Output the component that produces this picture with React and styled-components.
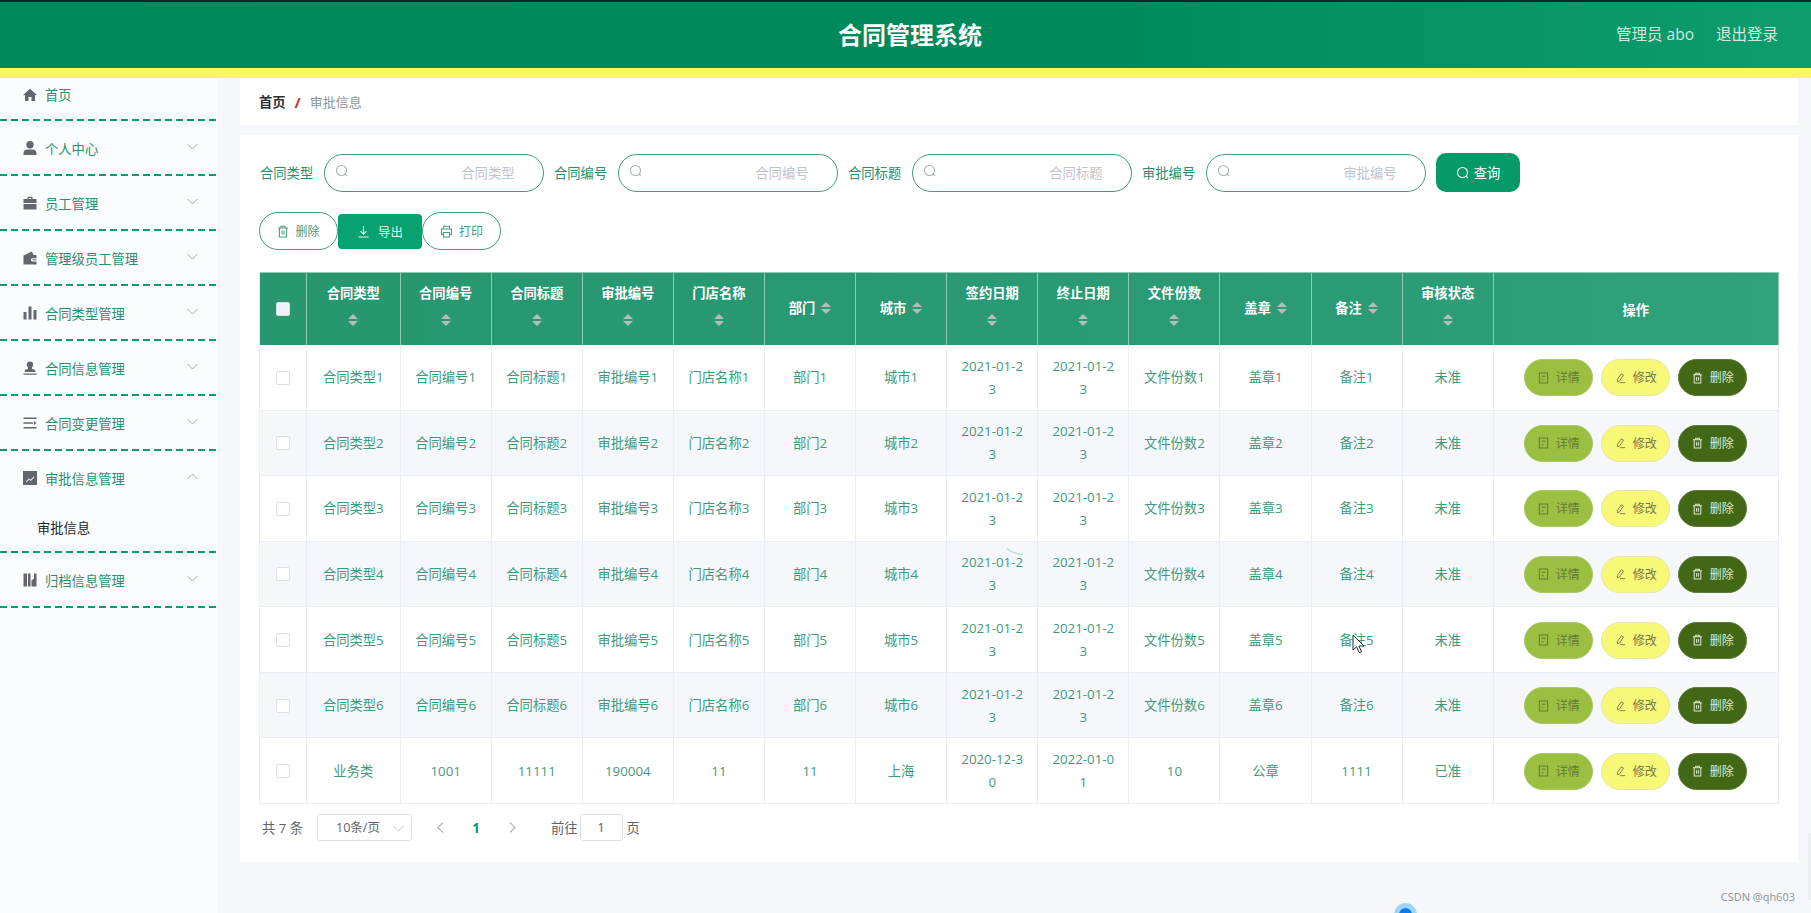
import React from 'react';
import styled, { createGlobalStyle } from 'styled-components';

const GlobalStyle = createGlobalStyle`
    html, body {
        margin: 0;
        padding: 0;
        background: #f5f7fa;
    }
    * {
        box-sizing: border-box;
    }
    body {
        font-family: 'Open Sans', 'Noto Sans CJK SC', sans-serif;
        font-size: 13.3px;
    }
`;

const Page = styled.div`
    position: relative;
    width: 1811px;
    height: 913px;
    overflow: hidden;
    background: #f5f7fa;
`;

const Header = styled.header`
    display: grid;
    grid-template-columns: 1fr auto 1fr;
    align-items: center;
    height: 78px;
    padding: 0 33px 4px 42px;
    background: linear-gradient(90deg, #00885a 0%, #008a5b 60%, #0f9d6e 100%);
    border-top: 2px solid #1d2127;
    border-bottom: 10px solid #f8f85c;
`;

const Title = styled.h1`
    grid-column: 2;
    margin: 0;
    font-size: 24px;
    font-weight: 700;
    color: #fff;
`;

const UserBar = styled.div`
    grid-column: 3;
    display: flex;
    justify-content: flex-end;
    gap: 22px;
    font-size: 15.5px;
    color: #cfe9dd;
`;

const Body = styled.div`
    display: flex;
    height: 835px;
`;

const Sidebar = styled.nav`
    flex: none;
    width: 217px;
    background: #fbfcfd;
`;

const MenuItem = styled.div`
    position: relative;
    display: flex;
    align-items: center;
    height: ${(props) => props.$height || 55}px;
    padding: 0 0 ${(props) => (props.$first ? 10 : 1)}px 23px;
    color: #2a8f70;
    &::after {
        content: '';
        display: ${(props) => (props.$open ? 'none' : 'block')};
        position: absolute;
        left: 0;
        right: 0;
        bottom: 0;
        height: 2px;
        background: repeating-linear-gradient(90deg, #0a9b6c 0 7px, transparent 7px 11px);
    }
`;

const MenuIcon = styled.svg`
    flex: none;
    width: 14px;
    height: 14px;
    margin-right: 8px;
    fill: #63666c;
`;

const Chevron = styled.svg`
    position: absolute;
    left: 187px;
    top: 22px;
    width: 11px;
    height: 7px;
    fill: none;
    stroke: #a6abb3;
    stroke-width: 1;
`;

const SubItem = styled(MenuItem)`
    padding: 0 0 4px 37px;
    color: #22262b;
`;

const Main = styled.main`
    flex: 1;
    min-width: 0;
    padding: 0 13px 0 23px;
`;

const Crumbs = styled.div`
    display: flex;
    align-items: center;
    height: 47px;
    margin-bottom: 10px;
    padding-left: 19px;
    background: #fff;
`;

const CrumbHome = styled.span`
    font-weight: 700;
    color: #303133;
`;

const CrumbSep = styled.span`
    margin: 0 9px;
    font-size: 15px;
    font-weight: 700;
    color: #c0341d;
`;

const CrumbCurrent = styled.span`
    font-size: 13px;
    color: #8b949b;
`;

const Card = styled.section`
    height: 727px;
    padding: 18px 19px 0;
    background: #fff;
`;

const SearchRow = styled.div`
    display: flex;
    align-items: center;
    height: 39px;
    padding-left: 1px;
`;

const SearchLabel = styled.label`
    width: 53px;
    margin-right: 10.5px;
    color: #2c8d6f;
    white-space: nowrap;
`;

const SearchBox = styled.div`
    position: relative;
    width: 220px;
    height: 38px;
    margin-right: 10.5px;
    border: 1px solid #3f9c80;
    border-radius: 19px;
    background: #fff;
    color: #a9b3b5;
    & > svg {
        position: absolute;
        left: 10px;
        top: 9px;
    }
`;

const SearchInput = styled.input`
    width: 100%;
    height: 100%;
    padding: 0 28px 0 30px;
    border: 0;
    outline: 0;
    background: transparent;
    font: inherit;
    text-align: right;
    &::placeholder {
        color: #bfc4cb;
        opacity: 1;
    }
`;

const QueryButton = styled.button`
    display: flex;
    align-items: center;
    justify-content: center;
    gap: 4px;
    width: 84px;
    height: 39px;
    border: 0;
    border-radius: 10px;
    background: #079a68;
    color: #fff;
    font: inherit;
`;

const ActionRow = styled.div`
    display: flex;
    align-items: center;
    height: 38px;
    margin: 20px 0 22px;
`;

const OutlineButton = styled.button`
    display: flex;
    align-items: center;
    justify-content: center;
    gap: 6px;
    width: 79px;
    height: 38px;
    border: 1px solid #3f9c80;
    border-radius: 19px;
    background: #fff;
    color: #4a9c80;
    font: inherit;
    font-size: 12px;
`;

const ExportButton = styled.button`
    display: flex;
    align-items: center;
    justify-content: center;
    gap: 8px;
    width: 84px;
    height: 35px;
    border: 0;
    border-radius: 4px;
    background: #07a26f;
    color: #dff5ea;
    font: inherit;
    font-size: 12.5px;
`;

const Table = styled.table`
    width: 1519px;
    table-layout: fixed;
    border-collapse: separate;
    border-spacing: 0;
    border-left: 1px solid #ebeef5;
`;

const HeadRow = styled.tr`
    background: linear-gradient(90deg, #26976f 0%, #2a9b75 70%, #30a27c 100%);
`;

const Th = styled.th`
    height: 73px;
    padding: 0 6px;
    border-top: 1px solid #8fcbb4;
    border-right: 1px solid #8fcbb4;
    color: #fff;
    font-size: 13.3px;
    font-weight: 700;
    text-align: center;
`;

const HeadInner = styled.div`
    display: flex;
    flex-direction: ${(props) => (props.$inline ? 'row' : 'column')};
    align-items: center;
    justify-content: center;
    gap: ${(props) => (props.$inline ? 6 : 12)}px;
    padding-bottom: ${(props) => (props.$inline ? 3 : 10)}px;
`;

const Sort = styled.span`
    display: inline-flex;
    flex-direction: column;
    gap: 2px;
    &::before,
    &::after {
        content: '';
        display: block;
        border-left: 5px solid transparent;
        border-right: 5px solid transparent;
    }
    &::before {
        border-bottom: 5px solid #b4bdb9;
    }
    &::after {
        border-top: 5px solid #b4bdb9;
    }
`;

const Row = styled.tr`
    background: ${(props) => (props.$striped ? '#f5f7fa' : '#fff')};
`;

const Td = styled.td`
    height: 65.57px;
    padding: 1px 13px 0;
    border-right: 1px solid #ebeef5;
    border-bottom: 1px solid #ebeef5;
    color: #3f9a7c;
    font-size: 13.3px;
    line-height: 23px;
    text-align: center;
    word-break: break-all;
`;

const Check = styled.span`
    display: block;
    width: 14px;
    height: 14px;
    margin: 0 auto;
    border: 1px solid #dcdfe6;
    border-radius: 2px;
    background: ${(props) => (props.$head ? '#eef2f7' : '#fff')};
`;

const RowActions = styled.div`
    display: flex;
    justify-content: center;
    gap: 8px;
`;

const tones = {
    detail: { bg: '#9abf41', fg: '#66793a', line: '#a9c866' },
    edit: { bg: '#f8f878', fg: '#77774a', line: '#e6e6a8' },
    remove: { bg: '#426816', fg: '#dfe8cf', line: '#5b7a38' },
};

const RowButton = styled.button`
    display: flex;
    align-items: center;
    justify-content: center;
    gap: 7px;
    width: 69px;
    height: 37px;
    padding: 0;
    border: 1px solid ${(props) => tones[props.$tone].line};
    border-radius: 19px;
    background: ${(props) => tones[props.$tone].bg};
    color: ${(props) => tones[props.$tone].fg};
    font: inherit;
    font-size: 12px;
    & > svg {
        width: 11px;
        height: 12px;
    }
`;

const Pager = styled.div`
    display: flex;
    align-items: center;
    height: 28px;
    margin-top: 10px;
    padding-left: 3px;
    color: #606266;
`;

const Total = styled.span`
    width: 55px;
`;

const SizeSelect = styled.div`
    position: relative;
    width: 95px;
    height: 27px;
    margin-right: 10px;
    padding-left: 18px;
    border: 1px solid #dcdfe6;
    border-radius: 3px;
    font-size: 12.5px;
    line-height: 25px;
    & > svg {
        position: absolute;
        right: 7px;
        top: 10px;
        left: auto;
    }
`;

const PageArrow = styled.span`
    display: flex;
    align-items: center;
    justify-content: center;
    width: 36px;
    color: #b4b8bf;
`;

const PageNumber = styled.span`
    width: 36px;
    font-weight: 700;
    color: #079a68;
    text-align: center;
`;

const GoText = styled.span`
    margin-left: ${(props) => props.$left || 0}px;
`;

const GoInput = styled.span`
    width: 43px;
    height: 27px;
    margin: 0 4px 0 2px;
    border: 1px solid #dcdfe6;
    border-radius: 3px;
    line-height: 25px;
    text-align: center;
`;

const Watermark = styled.span`
    position: absolute;
    right: 16px;
    bottom: 9px;
    font-size: 11px;
    color: #8f9296;
`;

const Cursor = styled.svg`
    position: absolute;
    left: 1352px;
    top: 634px;
    width: 13px;
    height: 20px;
`;

const BlueDot = styled.span`
    position: absolute;
    left: 1394px;
    top: 903px;
    width: 23px;
    height: 23px;
    border: 5px solid #9fd6ff;
    border-radius: 50%;
    background: #0a7cf0;
`;

const Arc = styled.svg`
    position: absolute;
    left: 1005px;
    top: 547px;
    width: 22px;
    height: 10px;
    fill: none;
    stroke: #c4e4da;
    stroke-width: 1.8;
`;

const ScrollEdge = styled.span`
    position: absolute;
    right: 0;
    top: 833px;
    width: 3px;
    height: 67px;
    background: #eceef0;
`;

const Search = () => (
    <svg width="14" height="14" viewBox="0 0 14 14" fill="none" stroke="currentColor" strokeWidth="1.1">
        <circle cx="6.5" cy="6.5" r="5" />
        <path d="M10 10l2 2" />
    </svg>
);

const Trash = () => (
    <svg width="12" height="13" viewBox="0 0 12 13" fill="none" stroke="currentColor" strokeWidth="1.1">
        <path d="M1 3h10M4 3V1.2h4V3M2.4 3v9h7.2V3M5 5.5v4M7 5.5v4" />
    </svg>
);

const Doc = () => (
    <svg width="12" height="13" viewBox="0 0 12 13" fill="none" stroke="currentColor" strokeWidth="1.1">
        <path d="M1.5 1h9v11h-9zM4 4.5h4M4 8.5h2" />
    </svg>
);

const Pen = () => (
    <svg width="13" height="13" viewBox="0 0 13 13" fill="none" stroke="currentColor" strokeWidth="1.1">
        <path d="M7.5 1.5l2.5 1.5-4.5 7-2.6 1-.1-2.8zM6 12h6" />
    </svg>
);

const Download = () => (
    <svg width="13" height="13" viewBox="0 0 13 13" fill="none" stroke="currentColor" strokeWidth="1.1">
        <path d="M6.5 1v8M3.5 6.2l3 3 3-3M1.5 12h10" />
    </svg>
);

const Printer = () => (
    <svg width="13" height="13" viewBox="0 0 13 13" fill="none" stroke="currentColor" strokeWidth="1.1">
        <path d="M3.5 4V1.2h6V4M3.5 9.5H1.5V4h10v5.5h-2M3.5 7.5h6v4.5h-6z" />
    </svg>
);

const Down = ({ up }) => (
    <Chevron viewBox="0 0 11 7">
        <path d={up ? 'M.5 6l5-5 5 5' : 'M.5 1l5 5 5-5'} />
    </Chevron>
);

const icons = {
    home: <path d="M7 .8L.3 6.8l.7.8L2 6.8V13h3.5V9h3v4H12V6.8l1 .8.7-.8z" />,
    user: <path d="M7 0a3.7 3.7 0 110 7.4A3.7 3.7 0 017 0zM.5 14v-2.2C.5 9.6 2.5 8.4 4.6 8.4h4.8c2.1 0 4.1 1.2 4.1 3.4V14z" />,
    bag: <path d="M4.5 3V.8h5V3H13.5v4H.5V3zM5.7 3h2.6V2H5.7zM.5 8h13v5.5H.5z" />,
    wallet: <path d="M.5 4.5L9 .5l1.5 3.5h3v3.2H9.5a1.6 1.6 0 000 3.2h4V13.5H.5zM9.6 8.3h3.9v1H9.6z" />,
    chart: <path d="M.5 6h3v7.5h-3zM5.5 .5h3v13h-3zM10.5 4h3v9.5h-3z" />,
    stamp: <path d="M7 .5a3.2 3.2 0 013.2 3.2c0 1.7-1.4 2.5-1.4 4l3.4 1.2V11H1.8V8.9l3.4-1.2c0-1.5-1.4-2.3-1.4-4A3.2 3.2 0 017 .5zM.5 12.5h13v1.2H.5z" />,
    lines: <path d="M.5 1.5h13v1.6H.5zM.5 6.2h9.5v1.6H.5zM.5 10.9h13v1.6H.5zM11 5l2.5 2-2.5 2z" />,
    trend: <path fillRule="evenodd" d="M0 0h14v14H0zM3 10.5l.6.7 2.6-2.6 1.7 1.4 3.4-3.8-.6-.6-2.9 3.2-1.7-1.4z" />,
    book: <path d="M.5 .5h3.5v13H.5zM5 .5h2.5v13H5zM8.5 .5h5v13h-5l0-6 2.5-2 0-5z" />,
};

const menu = [
    { text: '个人中心', icon: 'user' },
    { text: '员工管理', icon: 'bag' },
    { text: '管理级员工管理', icon: 'wallet' },
    { text: '合同类型管理', icon: 'chart' },
    { text: '合同信息管理', icon: 'stamp' },
    { text: '合同变更管理', icon: 'lines' },
];

const filters = ['合同类型', '合同编号', '合同标题', '审批编号'];

// 두 줄 헤더 / 한 줄 헤더는 inline 으로 구분
const columns = [
    { title: '合同类型', key: 'type', width: 93.6 },
    { title: '合同编号', key: 'no' },
    { title: '合同标题', key: 'name' },
    { title: '审批编号', key: 'approval' },
    { title: '门店名称', key: 'store' },
    { title: '部门', key: 'dept', inline: true },
    { title: '城市', key: 'city', inline: true },
    { title: '签约日期', key: 'start' },
    { title: '终止日期', key: 'end' },
    { title: '文件份数', key: 'files' },
    { title: '盖章', key: 'seal', inline: true },
    { title: '备注', key: 'note', inline: true },
];

const rows = [1, 2, 3, 4, 5, 6].map((n) => ({
    type: `合同类型${n}`,
    no: `合同编号${n}`,
    name: `合同标题${n}`,
    approval: `审批编号${n}`,
    store: `门店名称${n}`,
    dept: `部门${n}`,
    city: `城市${n}`,
    start: '2021-01-23',
    end: '2021-01-23',
    files: `文件份数${n}`,
    seal: `盖章${n}`,
    note: `备注${n}`,
    status: '未准',
}));

rows.push({
    type: '业务类',
    no: '1001',
    name: '11111',
    approval: '190004',
    store: '11',
    dept: '11',
    city: '上海',
    start: '2020-12-30',
    end: '2022-01-01',
    files: '10',
    seal: '公章',
    note: '1111',
    status: '已准',
});

function App() {
    return (
        <Page>
            <GlobalStyle />
            <Header>
                <Title>合同管理系统</Title>
                <UserBar>
                    <span>管理员 abo</span>
                    <span>退出登录</span>
                </UserBar>
            </Header>
            <Body>
                <Sidebar>
                    <MenuItem $height={43} $first>
                        <MenuIcon viewBox="0 0 14 14">{icons.home}</MenuIcon>
                        首页
                    </MenuItem>
                    {menu.map((item) => (
                        <MenuItem key={item.text}>
                            <MenuIcon viewBox="0 0 14 14">{icons[item.icon]}</MenuIcon>
                            {item.text}
                            <Down />
                        </MenuItem>
                    ))}
                    <MenuItem $open>
                        <MenuIcon viewBox="0 0 14 14">{icons.trend}</MenuIcon>
                        审批信息管理
                        <Down up />
                    </MenuItem>
                    <SubItem $height={47}>审批信息</SubItem>
                    <MenuItem>
                        <MenuIcon viewBox="0 0 14 14">{icons.book}</MenuIcon>
                        归档信息管理
                        <Down />
                    </MenuItem>
                </Sidebar>
                <Main>
                    <Crumbs>
                        <CrumbHome>首页</CrumbHome>
                        <CrumbSep>/</CrumbSep>
                        <CrumbCurrent>审批信息</CrumbCurrent>
                    </Crumbs>
                    <Card>
                        <SearchRow>
                            {filters.map((label) => (
                                <React.Fragment key={label}>
                                    <SearchLabel>{label}</SearchLabel>
                                    <SearchBox>
                                        <Search />
                                        <SearchInput placeholder={label} />
                                    </SearchBox>
                                </React.Fragment>
                            ))}
                            <QueryButton>
                                <Search />
                                查询
                            </QueryButton>
                        </SearchRow>
                        <ActionRow>
                            <OutlineButton>
                                <Trash />
                                删除
                            </OutlineButton>
                            <ExportButton>
                                <Download />
                                导出
                            </ExportButton>
                            <OutlineButton>
                                <Printer />
                                打印
                            </OutlineButton>
                        </ActionRow>
                        <Table>
                            <colgroup>
                                <col width="47" />
                                {columns.map((col) => (
                                    <col key={col.key} width={col.width || 91.1} />
                                ))}
                                <col width="91.1" />
                                <col width="285" />
                            </colgroup>
                            <thead>
                                <HeadRow>
                                    <Th>
                                        <Check $head />
                                    </Th>
                                    {columns.map((col) => (
                                        <Th key={col.key}>
                                            <HeadInner $inline={col.inline}>
                                                {col.title}
                                                <Sort />
                                            </HeadInner>
                                        </Th>
                                    ))}
                                    <Th>
                                        <HeadInner>
                                            审核状态
                                            <Sort />
                                        </HeadInner>
                                    </Th>
                                    <Th>操作</Th>
                                </HeadRow>
                            </thead>
                            <tbody>
                                {rows.map((row, i) => (
                                    <Row key={row.no} $striped={i % 2 === 1}>
                                        <Td>
                                            <Check />
                                        </Td>
                                        {columns.map((col) => (
                                            <Td key={col.key}>{row[col.key]}</Td>
                                        ))}
                                        <Td>{row.status}</Td>
                                        <Td>
                                            <RowActions>
                                                <RowButton $tone="detail">
                                                    <Doc />
                                                    详情
                                                </RowButton>
                                                <RowButton $tone="edit">
                                                    <Pen />
                                                    修改
                                                </RowButton>
                                                <RowButton $tone="remove">
                                                    <Trash />
                                                    删除
                                                </RowButton>
                                            </RowActions>
                                        </Td>
                                    </Row>
                                ))}
                            </tbody>
                        </Table>
                        <Pager>
                            <Total>共 7 条</Total>
                            <SizeSelect>
                                10条/页
                                <svg width="11" height="7" viewBox="0 0 11 7" fill="none" stroke="#c0c4cc">
                                    <path d="M.5 1l5 5 5-5" />
                                </svg>
                            </SizeSelect>
                            <PageArrow>
                                <svg width="7" height="11" viewBox="0 0 7 11" fill="none" stroke="currentColor" strokeWidth="1.3">
                                    <path d="M6 .5l-5 5 5 5" />
                                </svg>
                            </PageArrow>
                            <PageNumber>1</PageNumber>
                            <PageArrow>
                                <svg width="7" height="11" viewBox="0 0 7 11" fill="none" stroke="currentColor" strokeWidth="1.3">
                                    <path d="M1 .5l5 5-5 5" />
                                </svg>
                            </PageArrow>
                            <GoText $left={21}>前往</GoText>
                            <GoInput>1</GoInput>
                            <GoText>页</GoText>
                        </Pager>
                    </Card>
                </Main>
            </Body>
            <Arc viewBox="0 0 22 10">
                <path d="M2 1c3 4 8 6 16 6" />
            </Arc>
            <Cursor viewBox="0 0 13 20">
                <path d="M1 1v15l3.6-3.2 2.6 6 2.3-1-2.6-5.8H12z" fill="#fff" stroke="#23272c" strokeWidth="1" />
            </Cursor>
            <BlueDot />
            <ScrollEdge />
            <Watermark>CSDN @qh603</Watermark>
        </Page>
    );
}

export default App;
